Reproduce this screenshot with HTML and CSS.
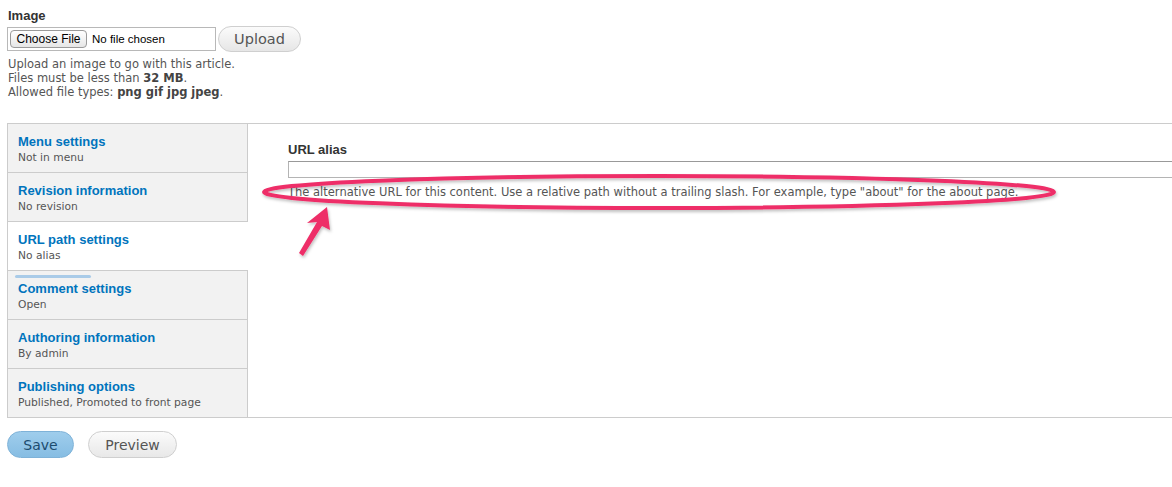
FILE: index.html
```html
<!DOCTYPE html>
<html>
<head>
<meta charset="utf-8">
<link rel="stylesheet" href="styles.css">
</head>
<body>
<div class="page">
  <div class="field">
    <div class="label">Image</div>
    <div class="file-row">
      <div class="file-input"><span class="choose">Choose File</span><span class="nofile">No file chosen</span></div>
      <button class="btn upload">Upload</button>
    </div>
    <div class="desc">
      <div>Upload an image to go with this article.</div>
      <div>Files must be less than <strong>32 MB</strong>.</div>
      <div>Allowed file types: <strong>png gif jpg jpeg</strong>.</div>
    </div>
  </div>

  <div class="vtabs">
    <ul class="vtab-menu">
      <li class="vtab"><span class="t">Menu settings</span><span class="s">Not in menu</span></li>
      <li class="vtab"><span class="t">Revision information</span><span class="s">No revision</span></li>
      <li class="vtab selected"><span class="t">URL path settings</span><span class="s">No alias</span></li>
      <li class="vtab focus-bar"><span class="t">Comment settings</span><span class="s">Open</span></li>
      <li class="vtab"><span class="t">Authoring information</span><span class="s">By admin</span></li>
      <li class="vtab"><span class="t">Publishing options</span><span class="s">Published, Promoted to front page</span></li>
    </ul>
    <div class="vtab-pane">
      <div class="label pane-label">URL alias</div>
      <div class="text-input"></div>
      <div class="pane-desc">The alternative URL for this content. Use a relative path without a trailing slash. For example, type "about" for the about page.</div>
    </div>
  </div>

  <div class="actions">
    <button class="btn save">Save</button>
    <button class="btn preview">Preview</button>
  </div>
</div>

<svg class="annot" width="1172" height="487" viewBox="0 0 1172 487">
  <defs>
    <filter id="sh" x="-20%" y="-20%" width="140%" height="140%">
      <feDropShadow dx="1" dy="2" stdDeviation="1.5" flood-color="#000" flood-opacity="0.25"/>
    </filter>
  </defs>
  <ellipse cx="659" cy="192" rx="395" ry="16" fill="none" stroke="#ee2f68" stroke-width="4" filter="url(#sh)"/>
  <g filter="url(#sh)" fill="#ee2f68">
    <path d="M327 207 L330 230 L322 226 L303 256 L299 253 L317 222 L307 223 Z"/>
  </g>
</svg>
</body>
</html>
```

FILE: styles.css
```css
html, body {
  margin: 0;
  padding: 0;
  overflow: hidden;
  background: #fff;
}
body {
  font-family: "DejaVu Sans", "Liberation Sans", sans-serif;
  color: #333;
  font-size: 12px;
}
.page {
  width: 1240px;
  padding: 8px 0 0 7px;
}
.label {
  font-family: "Liberation Sans", Arial, sans-serif;
  font-weight: bold;
  font-size: 13px;
  line-height: 15px;
  color: #333;
  padding-left: 1px;
}
.pane-label { padding-left: 0; }
.file-row {
  display: flex;
  align-items: center;
  gap: 2px;
  margin-top: 3px;
  height: 26px;
}
.file-input {
  box-sizing: border-box;
  width: 209px;
  height: 24px;
  border: 1px solid #b8b8b8;
  display: flex;
  align-items: center;
  padding-left: 2px;
  gap: 5px;
  font-size: 11.5px;
  color: #000;
  font-family: "Liberation Sans", sans-serif;
}
.choose {
  box-sizing: border-box;
  height: 18px;
  width: 77px;
  border: 1px solid #9a9a9a;
  border-radius: 4px;
  background: linear-gradient(#ffffff, #e6e6e6);
  display: flex;
  align-items: center;
  justify-content: center;
  font-size: 12px;
}
.nofile { font-size: 11.5px; }
.btn {
  font-family: "DejaVu Sans", "Liberation Sans", sans-serif;
  border-radius: 14px;
  cursor: pointer;
  padding: 0;
  box-sizing: border-box;
}
.upload {
  width: 83px;
  height: 26px;
  border: 1px solid #cfcfcf;
  background: linear-gradient(#fbfbfb, #e6e6e6);
  color: #555;
  font-size: 14.5px;
}
.desc {
  margin-top: 5px;
  font-size: 11.5px;
  line-height: 14px;
  color: #555;
  padding-left: 1px;
}
.desc strong { color: #444; }
.vtabs {
  margin-top: 24px;
  display: flex;
  border-top: 1px solid #ccc;
  border-bottom: 1px solid #ccc;
  border-left: 1px solid #ccc;
}
.vtab-menu {
  list-style: none;
  margin: 0;
  padding: 0;
  width: 239px;
  flex: none;
  border-right: 1px solid #ccc;
  background: #f2f2f2;
}
.vtab {
  box-sizing: border-box;
  height: 49px;
  border-bottom: 1px solid #ccc;
  padding: 10px 0 0 10px;
  display: flex;
  flex-direction: column;
  background: #f2f2f2;
  position: relative;
}
.vtab:last-child { border-bottom: none; height: 48px; }
.vtab.selected { background: #fff; margin-right: -1px; }
.vtab .t {
  font-family: "Liberation Sans", Arial, sans-serif;
  color: #0074bd;
  font-weight: bold;
  font-size: 13px;
  line-height: 16px;
}
.vtab .s {
  color: #555;
  font-size: 10.7px;
  line-height: 16px;
}
.focus-bar::before {
  content: "";
  position: absolute;
  left: 7px;
  top: 4px;
  width: 76px;
  height: 3px;
  border-radius: 2px;
  background: #a9cbe8;
}
.vtab-pane {
  flex: 1;
  padding: 18px 0 0 40px;
}
.text-input {
  box-sizing: border-box;
  height: 17px;
  margin-top: 4px;
  border: 1px solid #b4b4b4;
  border-top-color: #999;
  border-right: none;
}
.pane-desc {
  margin-top: 7px;
  font-size: 11.5px;
  line-height: 14px;
  color: #555;
  white-space: nowrap;
}
.actions {
  display: flex;
  gap: 14px;
  margin-top: 13px;
}
.save {
  width: 67px;
  height: 27px;
  border: 1px solid #7eb2d8;
  background: linear-gradient(#9fcdec, #86bde3);
  color: #1d4c6f;
  font-size: 14px;
}
.preview {
  width: 89px;
  height: 27px;
  border: 1px solid #cfcfcf;
  background: linear-gradient(#fbfbfb, #e8e8e8);
  color: #555;
  font-size: 14px;
}
.annot {
  position: absolute;
  left: 0;
  top: 0;
  pointer-events: none;
}
```
